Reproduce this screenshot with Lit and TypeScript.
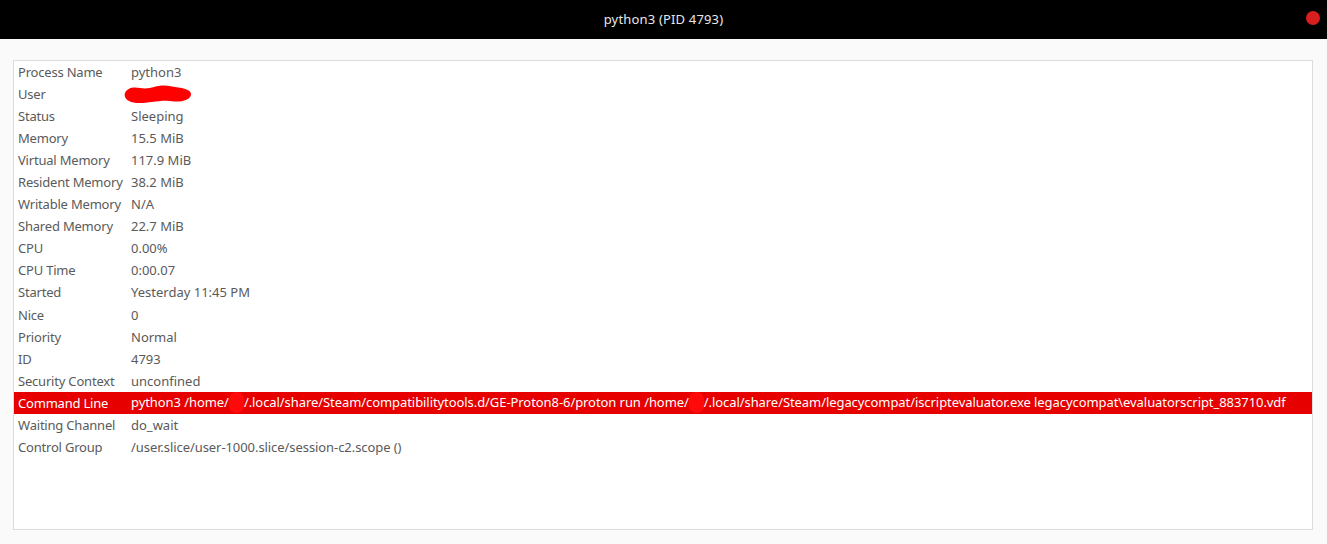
import { LitElement, css, html } from "lit";
import { customElement } from "lit/decorators.js";

const scribble = html`<svg class="scribble" width="76" height="24" viewBox="0 0 76 24">
  <path
    d="M5 11C8 5 14 5 20 6C26 7 30 6 34 5C40 3 46 3 52 4.500C60 5.500 71 7 71 12C71 18 62 20 54 19.500C46 18 40 19 32 20C24 21 14 22 9 19C5 17 4 14 5 11Z"
    fill="#f00"
  />
</svg>`;

const gap = html`<span class="gap"></span>`;

const rows: [string, unknown][] = [
  ["Process Name", "python3"],
  ["User", scribble],
  ["Status", "Sleeping"],
  ["Memory", "15.5 MiB"],
  ["Virtual Memory", "117.9 MiB"],
  ["Resident Memory", "38.2 MiB"],
  ["Writable Memory", "N/A"],
  ["Shared Memory", "22.7 MiB"],
  ["CPU", "0.00%"],
  ["CPU Time", "0:00.07"],
  ["Started", "Yesterday 11:45 PM"],
  ["Nice", "0"],
  ["Priority", "Normal"],
  ["ID", "4793"],
  ["Security Context", "unconfined"],
  [
    "Command Line",
    html`python3 /home/${gap}/.local/share/Steam/compatibilitytools.d/GE-Proton8-6/proton run /home/${gap}/.local/share/Steam/legacycompat/iscriptevaluator.exe legacycompat\\evaluatorscript_883710.vdf`,
  ],
  ["Waiting Channel", "do_wait"],
  ["Control Group", "/user.slice/user-1000.slice/session-c2.scope ()"],
];

@customElement("app-root")
export class AppRoot extends LitElement {
  static styles = css`
    :host {
      display: flex;
      flex-direction: column;
      height: 544px;
      background: #fafafa;
      font-family: "Noto Sans", sans-serif;
      font-size: 13px;
      color: #5a5a5a;
    }

    .titlebar {
      flex: none;
      height: 38px;
      padding-bottom: 1px;
      display: flex;
      align-items: center;
      justify-content: center;
      position: relative;
      background: #000;
      color: #e8e8e8;
      letter-spacing: 0.17px;
    }

    .close {
      position: absolute;
      top: 11px;
      right: 7px;
      width: 14px;
      height: 14px;
      border-radius: 50%;
      background: #d81f1f;
    }

    .content {
      flex: 1;
      padding: 21px 14px 14px 13px;
      display: flex;
      min-height: 0;
    }

    .panel {
      flex: 1;
      background: #fff;
      border: 1px solid #dcdcdc;
    }

    .row {
      display: flex;
      align-items: center;
      height: 22px;
      padding-left: 4px;
      white-space: nowrap;
    }

    /* the list sits one pixel lower from here on */
    .row:nth-child(11) {
      margin-bottom: 1px;
    }

    .row.selected {
      background: #e60000;
      color: #fff;
    }

    .label {
      flex: none;
      width: 113px;
      letter-spacing: -0.2px;
    }

    .value {
      position: relative;
    }

    .value.path {
      letter-spacing: -0.07px;
    }

    .gap {
      display: inline-block;
      width: 15px;
      height: 21px;
      margin-top: -4px;
      vertical-align: -6px;
      border-radius: 7px;
      background: #ff0a0a;
    }

    .scribble {
      position: absolute;
      top: -12px;
      left: -11px;
      filter: blur(0.5px);
    }
  `;

  render() {
    return html`
      <div class="titlebar">python3 (PID 4793)<span class="close"></span></div>
      <div class="content">
        <div class="panel">
          ${rows.map(
            ([label, value]) => html`
              <div class="row ${label === "Command Line" ? "selected" : ""}">
                <div class="label">${label}</div>
                <div class="value ${label === "Command Line" || label === "Control Group" ? "path" : ""}">${value}</div>
              </div>
            `
          )}
        </div>
      </div>
    `;
  }
}
